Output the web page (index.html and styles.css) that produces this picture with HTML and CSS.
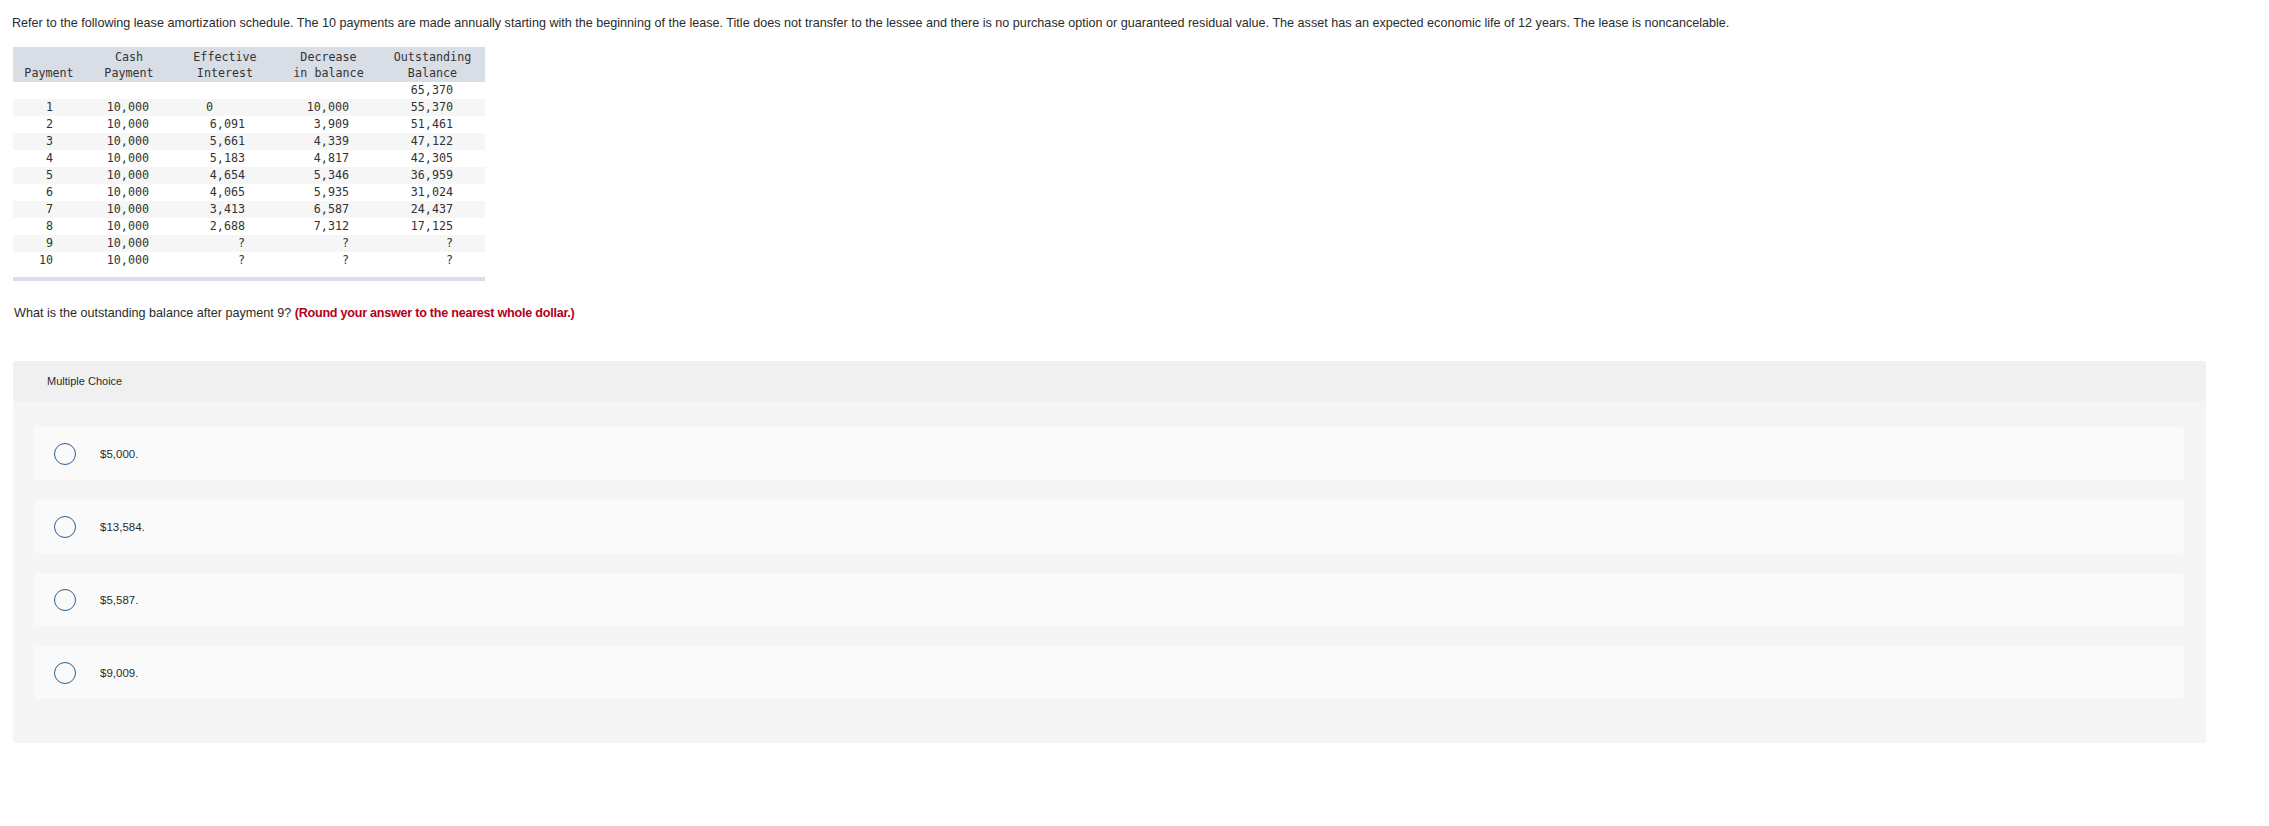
FILE: index.html
```html
<!DOCTYPE html>
<html lang="en">
<head>
<meta charset="UTF-8">
<title>Lease Amortization Question</title>
<link rel="stylesheet" href="styles.css">
</head>
<body>
    <p class="intro">Refer to the following lease amortization schedule. The 10 payments are made annually starting with the beginning of the lease. Title does not transfer to the lessee and there is no purchase option or guaranteed residual value. The asset has an expected economic life of 12 years. The lease is noncancelable.</p>

    <table class="schedule">
        <tr>
            <th>Payment</th>
            <th>Cash<br>Payment</th>
            <th>Effective<br>Interest</th>
            <th>Decrease<br>in balance</th>
            <th>Outstanding<br>Balance</th>
        </tr>
        <tr><td></td><td></td><td></td><td></td><td>65,370</td></tr>
        <tr><td>1</td><td>10,000</td><td class="zero">0</td><td>10,000</td><td>55,370</td></tr>
        <tr><td>2</td><td>10,000</td><td>6,091</td><td>3,909</td><td>51,461</td></tr>
        <tr><td>3</td><td>10,000</td><td>5,661</td><td>4,339</td><td>47,122</td></tr>
        <tr><td>4</td><td>10,000</td><td>5,183</td><td>4,817</td><td>42,305</td></tr>
        <tr><td>5</td><td>10,000</td><td>4,654</td><td>5,346</td><td>36,959</td></tr>
        <tr><td>6</td><td>10,000</td><td>4,065</td><td>5,935</td><td>31,024</td></tr>
        <tr><td>7</td><td>10,000</td><td>3,413</td><td>6,587</td><td>24,437</td></tr>
        <tr><td>8</td><td>10,000</td><td>2,688</td><td>7,312</td><td>17,125</td></tr>
        <tr><td>9</td><td>10,000</td><td>?</td><td>?</td><td>?</td></tr>
        <tr><td>10</td><td>10,000</td><td>?</td><td>?</td><td>?</td></tr>
    </table>

    <p class="question">What is the outstanding balance after payment 9? <strong>(Round your answer to the nearest whole dollar.)</strong></p>

    <div class="choices">
        <div class="choices-head">Multiple Choice</div>
        <div class="choices-body">
            <label class="option"><span class="radio"></span><span>$5,000.</span></label>
            <label class="option"><span class="radio"></span><span>$13,584.</span></label>
            <label class="option"><span class="radio"></span><span>$5,587.</span></label>
            <label class="option"><span class="radio"></span><span>$9,009.</span></label>
        </div>
    </div>
</body>
</html>
```

FILE: styles.css
```css
body {
    margin: 0;
    padding: 0 12px;
    font-family: "Liberation Sans", Arial, sans-serif;
    color: #2b2b2b;
    background: #fff;
}
.intro {
    margin: 15px 0 0;
    font-size: 12.6px;
    line-height: 16px;
}
.schedule {
    margin: 16px 0 0 1px;
    border-collapse: collapse;
    font-family: "DejaVu Sans Mono", "Liberation Mono", monospace;
    font-size: 11.7px;
    color: #333;
    border-bottom: 4px solid #d9dde6;
}
.schedule th {
    background-color: #d9dde6;
    font-weight: normal;
    line-height: 16px;
    padding: 2px 0 1px;
    text-align: center;
    vertical-align: bottom;
}
.schedule td {
    height: 17px;
    padding: 0 32px 0 0;
    text-align: right;
    line-height: 17px;
}
.schedule tr:nth-child(odd) td {
    background-color: #f6f6f6;
}
.schedule tr:nth-child(2) td {
    background-color: #fff;
}
.schedule tr:last-child td {
    padding-bottom: 8px;
}
.schedule th:nth-child(1), .schedule td:nth-child(1) { width: 72px; }
.schedule th:nth-child(2), .schedule td:nth-child(2) { width: 88px; }
.schedule th:nth-child(3), .schedule td:nth-child(3) { width: 104px; }
.schedule th:nth-child(4), .schedule td:nth-child(4) { width: 103px; }
.schedule th:nth-child(5), .schedule td:nth-child(5) { width: 105px; }
.schedule td:nth-child(2) { padding-right: 24px; }
.schedule td:nth-child(4) { padding-right: 31px; }
.schedule td.zero {
    text-align: left;
    padding: 0 0 0 33px;
}
.schedule th, .schedule td {
    box-sizing: border-box;
}
.question {
    margin: 24px 0 0 2px;
    font-size: 12.6px;
    line-height: 16px;
}
.question strong {
    color: #b3001b;
    letter-spacing: -0.25px;
}
.choices {
    margin: 40px 0 0 1px;
    width: 2193px;
    background-color: #f5f5f5;
    border-radius: 3px;
    overflow: hidden;
}
.choices-head {
    height: 40px;
    line-height: 40px;
    padding-left: 34px;
    background-color: #f0f0f0;
    font-size: 11px;
}
.choices-body {
    display: flex;
    flex-direction: column;
    gap: 20px;
    padding: 26px 22px 44px 21px;
}
.option {
    display: flex;
    align-items: center;
    height: 53px;
    padding-left: 20px;
    background-color: #fafafa;
    border-radius: 2px;
    font-size: 11.5px;
}
.radio {
    width: 22px;
    height: 22px;
    border: 1.5px solid #2f5f8f;
    border-radius: 50%;
    margin-right: 24px;
    box-sizing: border-box;
}
```
